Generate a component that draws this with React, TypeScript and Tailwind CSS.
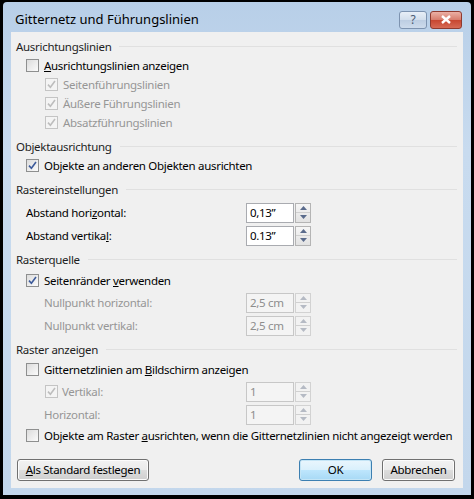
import React from "react";

type CheckProps = { checked?: boolean; disabled?: boolean };

function CheckBox({ checked, disabled }: CheckProps) {
  return (
    <div
      className={
        "w-[13px] h-[13px] shrink-0 border flex items-center justify-center " +
        (disabled
          ? "border-[#c4c4c4] bg-[#f4f4f4]"
          : "border-[#8e8f8f] bg-[linear-gradient(135deg,#dcdcdc,#fbfbfb)]")
      }
    >
      {checked && (
        <svg width="9" height="9" viewBox="0 0 9 9">
          <path
            d="M1 4.6 L3.4 7.2 L8 1"
            fill="none"
            stroke={disabled ? "#bdbdbd" : "#3c5a9a"}
            strokeWidth="1.6"
          />
        </svg>
      )}
    </div>
  );
}

function Section({ title }: { title: string }) {
  return (
    <div className="flex items-center h-[19px] pl-[5px] pr-[6px] text-[#1e1e1e]">
      <span>{title}</span>
      <div className="flex-1 h-px bg-[#e0e0e0] ml-[8px]" />
    </div>
  );
}

function Spinner({ value, disabled }: { value: string; disabled?: boolean }) {
  const arrow = disabled ? "#b5bac4" : "#5a6b8c";
  return (
    <div className="flex">
      <div
        className={
          "w-[48px] h-[20px] border flex items-center pl-[3px] " +
          (disabled
            ? "border-[#c7c7c7] bg-[#f4f4f4] text-[#8d8d8d]"
            : "border-[#a9abb0] bg-white text-black")
        }
      >
        {value}
      </div>
      <div
        className={
          "w-[16px] h-[20px] ml-px border flex flex-col " +
          (disabled ? "border-[#d2d2d2] bg-[#f2f2f2]" : "border-[#b4b4b4] bg-[linear-gradient(#f6f6f6,#e2e2e2)]")
        }
      >
        <div className="flex-1 flex items-center justify-center border-b border-[#d0d0d0]">
          <svg width="7" height="4" viewBox="0 0 7 4">
            <path d="M0 4 L3.5 0 L7 4 Z" fill={arrow} />
          </svg>
        </div>
        <div className="flex-1 flex items-center justify-center">
          <svg width="7" height="4" viewBox="0 0 7 4">
            <path d="M0 0 L3.5 4 L7 0 Z" fill={arrow} />
          </svg>
        </div>
      </div>
    </div>
  );
}

function CheckRow({
  label,
  checked,
  disabled,
  indent,
}: {
  label: React.ReactNode;
  checked?: boolean;
  disabled?: boolean;
  indent?: boolean;
}) {
  return (
    <div
      className={
        "flex items-center h-[19px] gap-[5px] whitespace-nowrap " +
        (indent ? "pl-[34px] " : "pl-[15px] ") +
        (disabled ? "text-[#969696]" : "text-black")
      }
    >
      <CheckBox checked={checked} disabled={disabled} />
      <span>{label}</span>
    </div>
  );
}

function FieldRow({
  label,
  value,
  disabled,
  indent,
  check,
}: {
  label: React.ReactNode;
  value: string;
  disabled?: boolean;
  indent?: boolean;
  check?: boolean;
}) {
  return (
    <div className="flex items-center h-[23px]">
      <div
        className={
          "w-[235px] flex items-center gap-[4px] " +
          (check ? "pl-[34px] " : indent ? "pl-[33px] " : "pl-[15px] ") +
          (disabled ? "text-[#969696]" : "text-black")
        }
      >
        {check && <CheckBox checked disabled />}
        <span>{label}</span>
      </div>
      <Spinner value={value} disabled={disabled} />
    </div>
  );
}

function Btn({ children, primary, w }: { children: React.ReactNode; primary?: boolean; w: string }) {
  return (
    <button
      className={
        w +
        " h-[22px] rounded-[3px] border text-black flex items-center justify-center " +
        (primary
          ? "border-[#3c7fb1] bg-[linear-gradient(#eaf6fd_0%,#d9f0fc_50%,#bee6fd_50%,#a7d9f5_100%)] shadow-[inset_0_0_0_1px_#c4e5f6]"
          : "border-[#707070] bg-[linear-gradient(#f2f2f2_0%,#ebebeb_50%,#dddddd_50%,#cfcfcf_100%)] shadow-[inset_0_0_0_1px_#fcfcfc]")
      }
    >
      {children}
    </button>
  );
}

export default function App() {
  return (
    <div className="w-[474px] h-[499px] bg-black pt-[2px] pl-[3px] font-['Noto_Sans',sans-serif] text-[11.5px] tracking-[-0.3px] leading-none">
      <div className="w-[468px] h-[493px] bg-[linear-gradient(#b8cfe8,#c8dbef_30%,#c3d7ec)] flex flex-col rounded-t-[4px]">
        <div className="h-[30px] flex items-center pt-[5px] pl-[12px] pr-[9px] shrink-0">
          <span className="flex-1 text-black text-[13px] tracking-normal">Gitternetz und Führungslinien</span>
          <div className="w-[28px] h-[18px] rounded-[3px] border border-[#7d93b0] bg-[linear-gradient(#e8eff7,#d2deec_50%,#bccde2_50%,#cddbec)] flex items-center justify-center text-[#4a5a72] text-[12px] mr-[3px]">
            ?
          </div>
          <div className="w-[32px] h-[18px] rounded-[3px] border border-[#8f3a2f] bg-[linear-gradient(#ebb0a5,#d77b6b_50%,#c7452f_50%,#d66a55)] flex items-center justify-center">
            <svg width="10" height="9" viewBox="0 0 10 9">
              <path d="M1 1 L9 8 M9 1 L1 8" stroke="white" strokeWidth="2.4" />
            </svg>
          </div>
        </div>
        <div className="mx-[8px] w-[452px] h-[456px] bg-[#f0f0f0] flex flex-col pt-[5px]">
          <Section title="Ausrichtungslinien" />
          <CheckRow
            label={
              <>
                <u>A</u>usrichtungslinien anzeigen
              </>
            }
          />
          <CheckRow label="Seitenführungslinien" checked disabled indent />
          <CheckRow label="Äußere Führungslinien" checked disabled indent />
          <CheckRow label="Absatzführungslinien" checked disabled indent />

          <div className="mt-[5px]">
            <Section title="Objektausrichtung" />
          </div>
          <CheckRow label="Objekte an anderen Objekten ausrichten" checked />

          <div className="mt-[5px]">
            <Section title="Rastereinstellungen" />
          </div>
          <div className="mt-[2px]">
            <FieldRow
              label={
                <>
                  Abstand hori<u>z</u>ontal:
                </>
              }
              value={"0,13\u201D"}
            />
            <FieldRow
              label={
                <>
                  Abstand vertika<u>l</u>:
                </>
              }
              value={"0.13\u201D"}
            />
          </div>

          <div className="mt-[3px]">
            <Section title="Rasterquelle" />
          </div>
          <div className="mt-[2px]">
            <CheckRow
              label={
                <>
                  Seitenränder <u>v</u>erwenden
                </>
              }
              checked
            />
          </div>
          <div className="mt-px">
            <FieldRow label="Nullpunkt horizontal:" value="2,5 cm" disabled indent />
            <FieldRow label="Nullpunkt vertikal:" value="2,5 cm" disabled indent />
          </div>

          <div className="mt-[3px]">
            <Section title="Raster anzeigen" />
          </div>
          <div className="mt-px">
            <CheckRow
              label={
                <>
                  Gitternetzlinien am <u>B</u>ildschirm anzeigen
                </>
              }
            />
          </div>
          <div className="mt-px">
            <FieldRow label="Vertikal:" value="1" disabled check />
            <FieldRow label="Horizontal:" value="1" disabled indent />
          </div>
          <CheckRow
            label={
              <>
                Objekte am Raster <u>a</u>usrichten, wenn die Gitternetzlinien nicht angezeigt werden
              </>
            }
          />

          <div className="mt-[14px] flex items-center pl-[6px] pr-[8px]">
            <Btn w="w-[132px]">
              <u>A</u>ls Standard festlegen
            </Btn>
            <div className="flex-1" />
            <Btn w="w-[73px]" primary>
              OK
            </Btn>
            <div className="w-[10px]" />
            <Btn w="w-[73px]">Abbrechen</Btn>
          </div>
        </div>
      </div>
    </div>
  );
}
